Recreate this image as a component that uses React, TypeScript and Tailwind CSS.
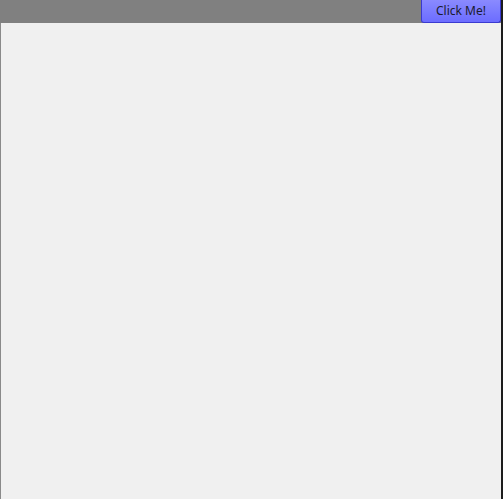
export default function App() {
  return (
    <div className="flex h-[499px] w-[503px] bg-[#1c1c1c]">
      <div className="flex w-[501px] flex-col">
        <div className="flex h-[23px] justify-end bg-[#808080]">
          <button className="h-[23px] w-[80px] rounded-b-[3px] border border-t-0 border-[#3a3ad0] bg-gradient-to-b from-[#8a8aff] to-[#6c6cff] pb-[1px] text-[12px] text-[#1a1a2e] [font-family:'Noto_Sans',sans-serif]">
            Click Me!
          </button>
        </div>
        <div className="flex-1 border-l border-[#8a8a8a] bg-[#f0f0f0]" />
      </div>
    </div>
  );
}
